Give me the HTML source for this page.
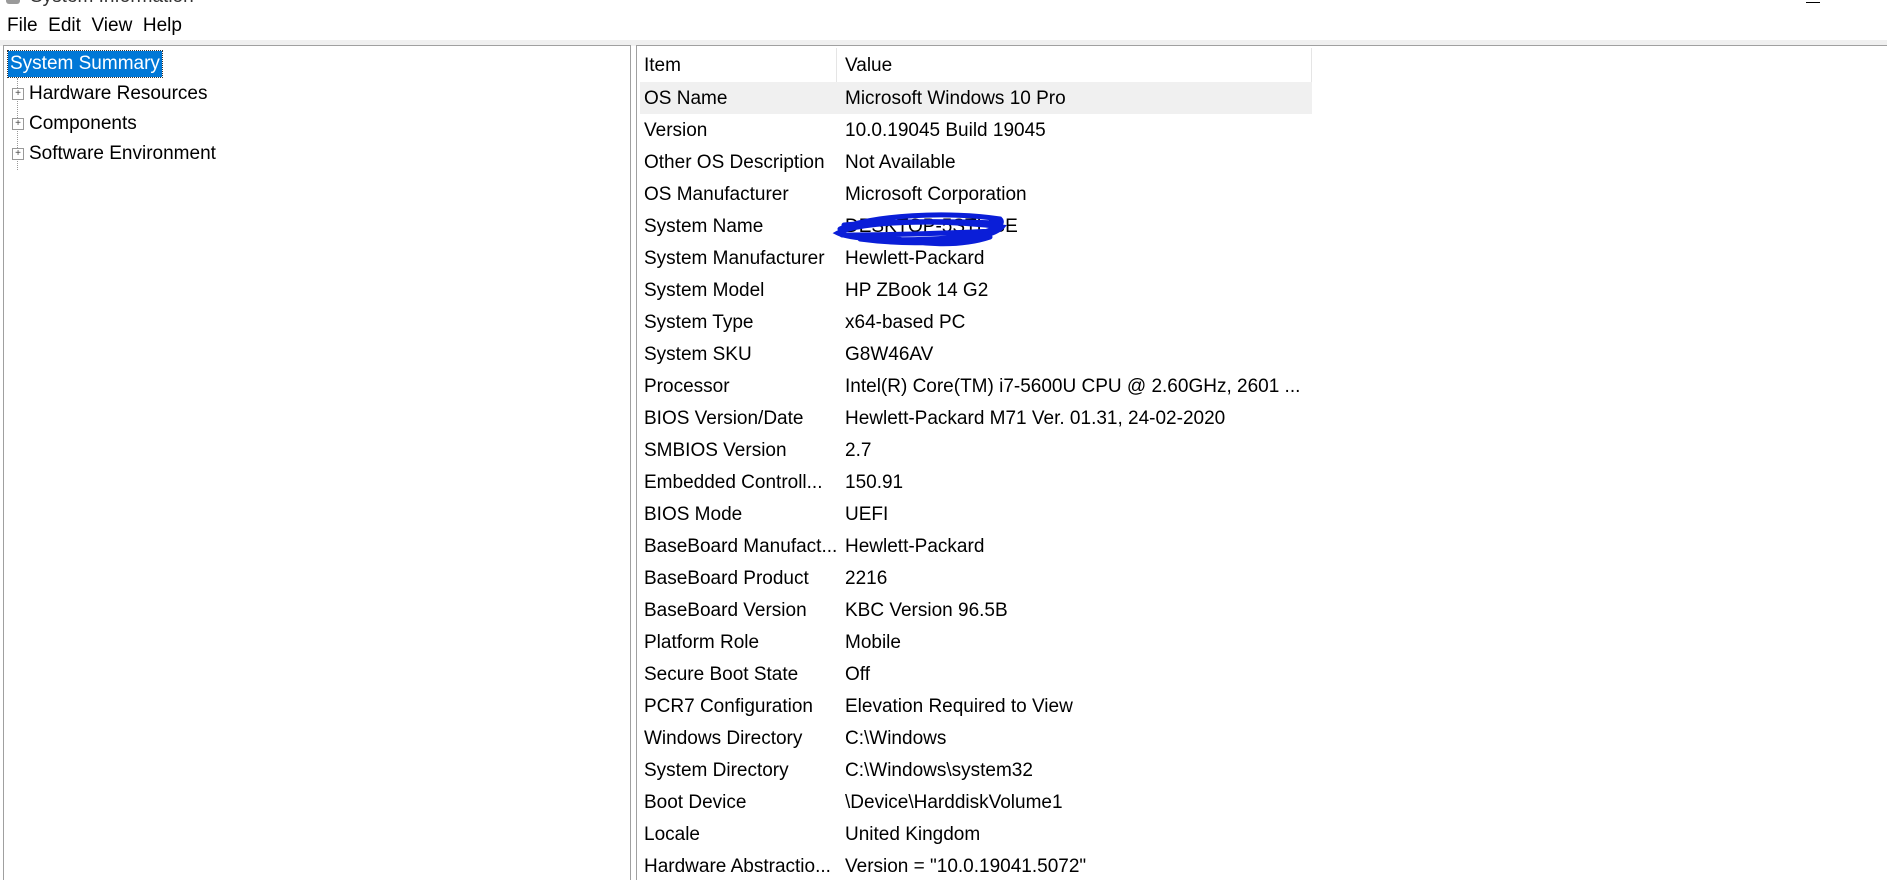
<!DOCTYPE html>
<html><head><meta charset="utf-8"><style>
html,body{margin:0;width:1887px;height:880px;overflow:hidden}
body{background:#fff;font-family:"Liberation Sans",sans-serif;font-size:19px;color:#000;position:relative}
.a{position:absolute;white-space:nowrap}
.row{position:absolute;left:638px;width:1249px;height:32px;line-height:32px}
.row span{position:absolute}
.row .k{left:6px}.row .v{left:207px}
</style></head><body>
<div class="a" style="left:6px;top:-10px;width:14px;height:14px;background:#9a9a9a;border-radius:3px"></div>
<div class="a" style="left:30px;top:-14px;color:#333">System Information</div>
<div class="a" style="left:1806px;top:2px;width:14px;height:1px;background:#000"></div>
<div class="a" style="left:7px;top:15px;line-height:22px">File&nbsp;&nbsp;Edit&nbsp;&nbsp;View&nbsp;&nbsp;Help</div>
<div class="a" style="left:0;top:40px;width:1887px;height:6px;background:#f0f0f0"></div>
<div class="a" style="left:3px;top:45px;width:628px;height:837px;border:1px solid #a0a0a0;box-sizing:border-box"></div>
<div class="a" style="left:636px;top:45px;width:1260px;height:837px;border:1px solid #a0a0a0;box-sizing:border-box"></div>
<div class="a" style="left:8px;top:51px;width:154px;height:26px;background:#0078d7;color:#fff;line-height:26px;outline:1px dotted #333"><span style="margin-left:2px">System Summary</span></div>
<div class="a" style="left:17px;top:78px;height:92px;border-left:1px dotted #999"></div>
<div class="a" style="left:12px;top:88px;width:10px;height:10px;border:1px solid #999;background:#fff;font-size:10px;line-height:9px;text-align:center;color:#444">+</div>
<div class="a" style="left:12px;top:118px;width:10px;height:10px;border:1px solid #999;background:#fff;font-size:10px;line-height:9px;text-align:center;color:#444">+</div>
<div class="a" style="left:12px;top:148px;width:10px;height:10px;border:1px solid #999;background:#fff;font-size:10px;line-height:9px;text-align:center;color:#444">+</div>
<div class="a" style="left:29px;top:83px;line-height:22px">Hardware Resources</div>
<div class="a" style="left:29px;top:113px;line-height:22px">Components</div>
<div class="a" style="left:29px;top:143px;line-height:22px">Software Environment</div>
<div class="a" style="left:836px;top:48px;width:1px;height:34px;background:#e5e5e5"></div>
<div class="a" style="left:1311px;top:48px;width:1px;height:34px;background:#e5e5e5"></div>
<div class="row" style="top:50px"><span class="k">Item</span><span class="v">Value</span></div>
<div class="a" style="left:640px;top:82px;width:672px;height:32px;background:#f0f0f0"></div>
<div class="row" style="top:83px"><span class="k">OS Name</span><span class="v">Microsoft Windows 10 Pro</span></div>
<div class="row" style="top:115px"><span class="k">Version</span><span class="v">10.0.19045 Build 19045</span></div>
<div class="row" style="top:147px"><span class="k">Other OS Description</span><span class="v">Not Available</span></div>
<div class="row" style="top:179px"><span class="k">OS Manufacturer</span><span class="v">Microsoft Corporation</span></div>
<div class="row" style="top:211px"><span class="k">System Name</span><span class="v">DESKTOP-5STLIBE</span></div>
<svg class="a" style="left:830px;top:207px" width="180" height="44" viewBox="0 0 180 44"><path d="M10 22 C40 8 120 4 170 12 C178 20 150 30 100 32 C60 34 20 32 8 26 C30 14 110 12 172 20 C160 34 90 40 30 32 M14 18 C60 14 120 14 168 16 M12 28 C60 28 120 26 165 24 M60 30 C90 38 130 40 160 30" fill="none" stroke="#0a1ed8" stroke-width="5" stroke-linecap="round"/></svg>
<div class="row" style="top:243px"><span class="k">System Manufacturer</span><span class="v">Hewlett-Packard</span></div>
<div class="row" style="top:275px"><span class="k">System Model</span><span class="v">HP ZBook 14 G2</span></div>
<div class="row" style="top:307px"><span class="k">System Type</span><span class="v">x64-based PC</span></div>
<div class="row" style="top:339px"><span class="k">System SKU</span><span class="v">G8W46AV</span></div>
<div class="row" style="top:371px"><span class="k">Processor</span><span class="v">Intel(R) Core(TM) i7-5600U CPU @ 2.60GHz, 2601 ...</span></div>
<div class="row" style="top:403px"><span class="k">BIOS Version/Date</span><span class="v">Hewlett-Packard M71 Ver. 01.31, 24-02-2020</span></div>
<div class="row" style="top:435px"><span class="k">SMBIOS Version</span><span class="v">2.7</span></div>
<div class="row" style="top:467px"><span class="k">Embedded Controll...</span><span class="v">150.91</span></div>
<div class="row" style="top:499px"><span class="k">BIOS Mode</span><span class="v">UEFI</span></div>
<div class="row" style="top:531px"><span class="k">BaseBoard Manufact...</span><span class="v">Hewlett-Packard</span></div>
<div class="row" style="top:563px"><span class="k">BaseBoard Product</span><span class="v">2216</span></div>
<div class="row" style="top:595px"><span class="k">BaseBoard Version</span><span class="v">KBC Version 96.5B</span></div>
<div class="row" style="top:627px"><span class="k">Platform Role</span><span class="v">Mobile</span></div>
<div class="row" style="top:659px"><span class="k">Secure Boot State</span><span class="v">Off</span></div>
<div class="row" style="top:691px"><span class="k">PCR7 Configuration</span><span class="v">Elevation Required to View</span></div>
<div class="row" style="top:723px"><span class="k">Windows Directory</span><span class="v">C:\Windows</span></div>
<div class="row" style="top:755px"><span class="k">System Directory</span><span class="v">C:\Windows\system32</span></div>
<div class="row" style="top:787px"><span class="k">Boot Device</span><span class="v">\Device\HarddiskVolume1</span></div>
<div class="row" style="top:819px"><span class="k">Locale</span><span class="v">United Kingdom</span></div>
<div class="row" style="top:851px"><span class="k">Hardware Abstractio...</span><span class="v">Version = "10.0.19041.5072"</span></div>
</body></html>
